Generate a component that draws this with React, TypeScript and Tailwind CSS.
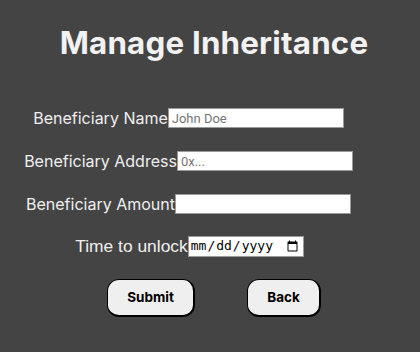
import { useState } from 'react';

const labelFont = "font-['Inter','DejaVu_Sans',sans-serif]";

function Field({
  label,
  placeholder,
  type = 'text',
  labelClass = labelFont,
}: {
  label: string;
  placeholder?: string;
  type?: string;
  labelClass?: string;
}) {
  const [value, setValue] = useState('');
  return (
    <div className="flex items-center justify-center pr-[43px] h-5">
      <label className={`${labelClass} text-[16px] text-[#f0f0f0] leading-5 whitespace-nowrap`}>{label}</label>
      <input
        type={type}
        value={value}
        onChange={(e) => setValue(e.target.value)}
        placeholder={placeholder}
        className="w-[176px] h-5 bg-white border border-[#9a9a9a] px-[3px] text-[13px] font-['Roboto','Liberation_Sans',sans-serif] text-black placeholder:text-[#757575] outline-none"
      />
    </div>
  );
}

export default function App() {
  const [date, setDate] = useState('');

  return (
    <div className="min-h-screen w-[420px] h-[352px] bg-[#444444] flex flex-col items-center">
      <h1 className="mt-[25px] text-[31.3px] leading-[37px] font-bold text-[#f2f2f2] font-['Inter','DejaVu_Sans',sans-serif] tracking-[0.2px] pl-[8px]">
        Manage Inheritance
      </h1>

      <form className="w-full mt-[46px] flex flex-col gap-[23px]" onSubmit={(e) => e.preventDefault()}>
        <Field label="Beneficiary Name" placeholder="John Doe" />
        <Field label="Beneficiary Address" placeholder="0x..." />
        <Field label="Beneficiary Amount" />
        <div className="flex items-center justify-center pr-[41px] h-5 mt-[-1px]">
          <label className="font-['Liberation_Sans','Arial',sans-serif] text-[17.4px] text-[#f0f0f0] leading-5 whitespace-nowrap">
            Time to unlock
          </label>
          <input
            type="date"
            value={date}
            onChange={(e) => setDate(e.target.value)}
            className="w-[116px] h-[21px] bg-white border border-[#9a9a9a] pl-[1px] pr-[2px] text-[13px] font-['DejaVu_Sans_Mono',monospace] text-black outline-none"
          />
        </div>

        <div className="flex items-center justify-center gap-[52px] mt-0 pl-[8px]">
          <button
            type="submit"
            className="w-[88px] h-[38px] rounded-[12px] bg-[#efefef] border border-black border-r-2 border-b-2 text-[13.5px] font-bold text-black font-['Inter','DejaVu_Sans',sans-serif]"
          >
            Submit
          </button>
          <button
            type="button"
            className="w-[74px] h-[38px] rounded-[12px] bg-[#efefef] border border-black border-r-2 border-b-2 text-[13.5px] font-bold text-black font-['Inter','DejaVu_Sans',sans-serif]"
          >
            Back
          </button>
        </div>
      </form>
    </div>
  );
}
